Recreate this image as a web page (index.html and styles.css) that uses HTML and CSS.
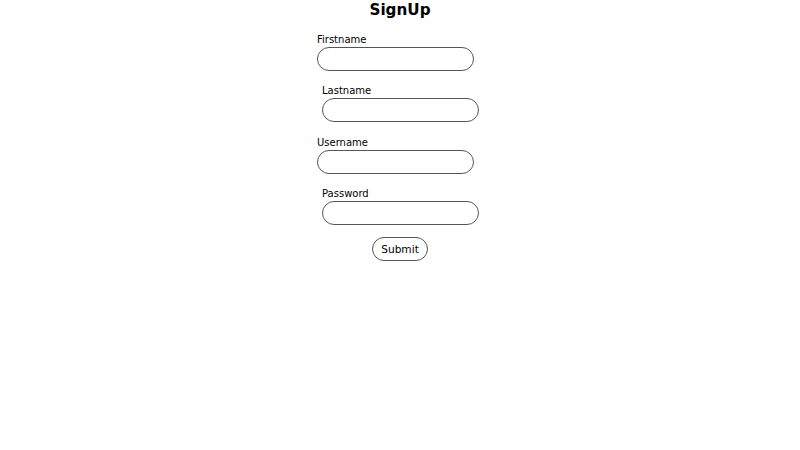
FILE: index.html
```html
<!DOCTYPE html>
<html>
<head>
<meta charset="utf-8">
<link rel="stylesheet" href="styles.css">
</head>
<body>
<div class="page">
  <h1 class="title">SignUp</h1>
  <form class="form">
    <div class="field field-left">
      <label class="label">Firstname</label>
      <input class="input" type="text">
    </div>
    <div class="field field-right">
      <label class="label">Lastname</label>
      <input class="input" type="text">
    </div>
    <div class="field field-left">
      <label class="label">Username</label>
      <input class="input" type="text">
    </div>
    <div class="field field-right">
      <label class="label">Password</label>
      <input class="input" type="password">
    </div>
    <button class="submit" type="button">Submit</button>
  </form>
</div>
</body>
</html>
```
FILE: styles.css
```css
html, body {
  margin: 0;
  padding: 0;
  background: #ffffff;
}
body {
  font-family: "DejaVu Sans", sans-serif;
  color: #000000;
}
.page {
  display: flex;
  flex-direction: column;
  align-items: center;
  padding-top: 1px;
}
.title {
  margin: 0;
  font-size: 15.2px;
  font-weight: bold;
  line-height: 18px;
}
.form {
  width: 162px;
  margin-top: 15px;
  margin-right: 4px;
  display: flex;
  flex-direction: column;
  gap: 14.33px;
}
.field {
  display: flex;
  flex-direction: column;
  width: 157px;
}
.field-left {
  align-self: flex-start;
}
.field-right {
  align-self: flex-end;
}
.label {
  font-size: 10px;
  line-height: 12px;
  margin-bottom: 1px;
}
.input {
  box-sizing: border-box;
  width: 157px;
  height: 24px;
  margin: 0;
  padding: 0 8px;
  border: 1px solid #555555;
  border-radius: 12px;
  background: #ffffff;
  outline: none;
}
.submit {
  align-self: center;
  position: relative;
  left: 2px;
  box-sizing: border-box;
  width: 56px;
  height: 24px;
  margin-top: -2px;
  padding: 0;
  border: 1px solid #555555;
  border-radius: 12px;
  background: #ffffff;
  color: #000000;
  font-family: "DejaVu Sans", sans-serif;
  font-size: 10.6px;
}
```
